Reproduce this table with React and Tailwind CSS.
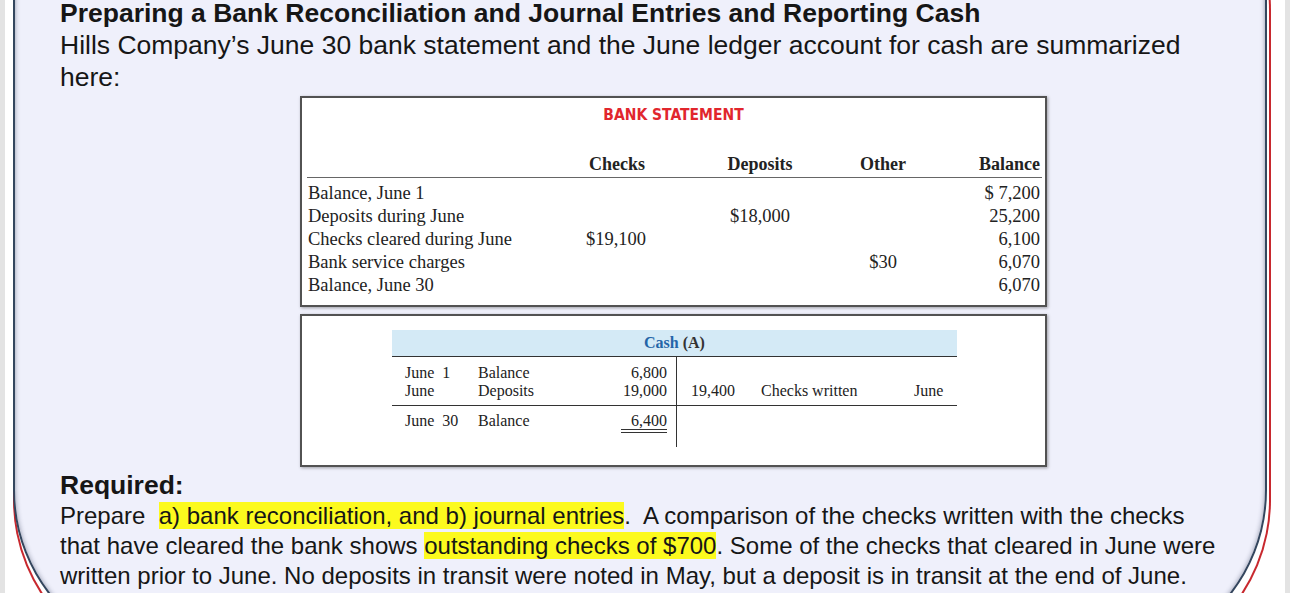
import React from "react";

const rows = [
  ["Balance, June 1", "", "", "", "$ 7,200"],
  ["Deposits during June", "", "$18,000", "", "25,200"],
  ["Checks cleared during June", "$19,100", "", "", "6,100"],
  ["Bank service charges", "", "", "$30", "6,070"],
  ["Balance, June 30", "", "", "", "6,070"],
];

function BankStatement() {
  return (
    <div className="ml-[240px] mt-[3px] w-[747px] h-[211px] bg-white border-2 border-[#525252] shadow-[1px_1px_3px_rgba(0,0,0,0.35)] font-['Liberation_Serif',serif] text-[#222]">
      <div className="mt-[6px] h-[22px] leading-[22px] text-center font-bold text-[15.5px] font-stretch-condensed text-[#e1262d] font-['DejaVu_Sans_Condensed','DejaVu_Sans',sans-serif]">
        BANK STATEMENT
      </div>
      <div className="ml-[5px] mr-[3px] mt-[27px] pb-[3px] border-b-[1.5px] border-[#666] grid grid-cols-[263px_94px_192px_54px_1fr] h-[25px] leading-[22px] text-[18px] font-bold">
        <div></div>
        <div className="text-center">Checks</div>
        <div className="text-center">Deposits</div>
        <div className="text-center">Other</div>
        <div className="text-right pr-[2px]">Balance</div>
      </div>
      <div className="ml-[5px] mr-[3px] pt-[4px] text-[18.5px] leading-[23px]">
        {rows.map((r, i) => (
          <div key={i} className="grid grid-cols-[263px_76px_144px_107px_1fr]">
            <div className="pl-[1px] whitespace-nowrap">{r[0]}</div>
            <div className="text-right">{r[1]}</div>
            <div className="text-right">{r[2]}</div>
            <div className="text-right">{r[3]}</div>
            <div className="text-right pr-[2px] whitespace-pre">{r[4]}</div>
          </div>
        ))}
      </div>
    </div>
  );
}

function CashAccount() {
  return (
    <div className="ml-[240px] mt-[7px] w-[747px] h-[153px] bg-white border-2 border-[#525252] shadow-[1px_1px_3px_rgba(0,0,0,0.35)] font-['Liberation_Serif',serif] text-[#222] text-[16px]">
      <div className="ml-[90px] mt-[14px] w-[565px]">
        <div className="h-[26px] leading-[26px] bg-[#d4eaf6] text-center text-[16px] font-semibold border-b-[1.5px] border-[#333] box-content">
          <span className="text-[#2465a8]">Cash</span> <span className="text-[#333]">(A)</span>
        </div>
        <div className="flex border-b-[1.5px] border-[#333] leading-[18px]">
          <div className="w-[285px] border-r-[1.5px] border-[#333] pt-[6.5px] pb-[5px] pl-[13px] pr-[9px]">
            <div className="grid grid-cols-[73px_1fr_auto]">
              <div className="whitespace-pre">June  1</div>
              <div>Balance</div>
              <div className="text-right">6,800</div>
            </div>
            <div className="grid grid-cols-[73px_1fr_auto]">
              <div>June</div>
              <div>Deposits</div>
              <div className="text-right">19,000</div>
            </div>
          </div>
          <div className="flex-1 pt-[24.5px] pl-[14px] flex">
            <span className="w-[70px]">19,400</span>
            <span className="w-[153px]">Checks written</span>
            <span>June</span>
          </div>
        </div>
        <div className="flex leading-[18px]">
          <div className="w-[285px] h-[41.5px] border-r-[1.5px] border-[#333] pt-[6.5px] pl-[13px] pr-[9px]">
            <div className="grid grid-cols-[73px_1fr_auto]">
              <div className="whitespace-pre">June  30</div>
              <div>Balance</div>
              <div className="text-right">
                <span className="inline-block pl-[10px] border-b-[4px] border-double border-[#333] leading-[16px]">6,400</span>
              </div>
            </div>
          </div>
          <div className="flex-1"></div>
        </div>
      </div>
    </div>
  );
}

const hl = "bg-[#fcfa1e]";

export default function App() {
  return (
    <div className="w-[1290px] h-[593px] overflow-hidden bg-white flex">
      <div className="w-[5px] h-full bg-[#e3e3e3] shrink-0"></div>
      <div className="ml-[8px] mt-[-170px] w-[1254px] h-[830px] shrink-0 rounded-[170px] border-2 border-[#34465e] bg-[#eff0fb] shadow-[inset_0_0_5px_rgba(30,40,70,0.45),2px_10px_0_0_#ffffff,2px_10px_0_2px_#c8282e] pt-[169px] pl-[45px] font-['Liberation_Sans',Arial,sans-serif] text-[#161616]">
        <div className="text-[26.5px] whitespace-nowrap">
          <div className="font-bold leading-[25px]">Preparing a Bank Reconciliation and Journal Entries and Reporting Cash</div>
          <div className="mt-[3px] leading-[32px]">Hills Company’s June 30 bank statement and the June ledger account for cash are summarized</div>
          <div className="leading-[32px]">here:</div>
        </div>
        <BankStatement />
        <CashAccount />
        <div className="mt-[3px] text-[26.5px] leading-[31px] font-bold">Required:</div>
        <div className="text-[24px] leading-[30px] whitespace-pre">
          <div>
            Prepare  <span className={hl}>a) bank reconciliation, and b) journal entries</span>.  A comparison of the checks written with the checks
          </div>
          <div>
            that have cleared the bank shows <span className={hl}>outstanding checks of $700</span>. Some of the checks that cleared in June were
          </div>
          <div>written prior to June. No deposits in transit were noted in May, but a deposit is in transit at the end of June.</div>
        </div>
      </div>
      <div className="ml-auto w-[5px] h-full bg-[#e3e3e3] shrink-0"></div>
    </div>
  );
}
